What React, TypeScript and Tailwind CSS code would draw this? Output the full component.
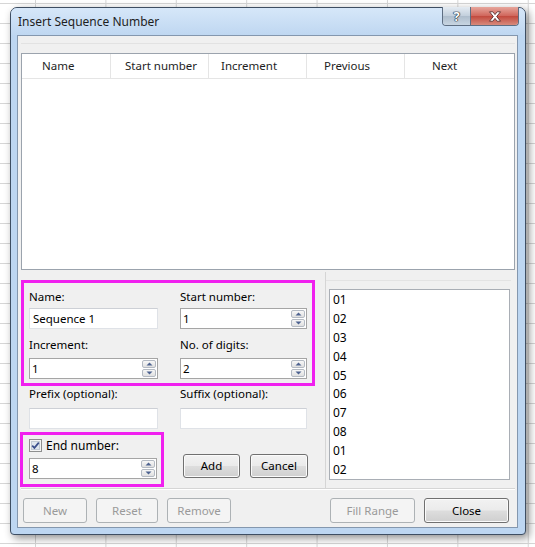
import React from 'react';

const Arrow = ({ up }: { up?: boolean }) => (
  <svg width="7" height="4" viewBox="0 0 7 4">
    <path d={up ? 'M0.5 3.5 L3.5 0.5 L6.5 3.5 Z' : 'M0.5 0.5 L3.5 3.5 L6.5 0.5 Z'} fill="#4d6290" />
  </svg>
);

const SpinBox = ({ value, className = '' }: { value: string; className?: string }) => (
  <div className={`flex h-[21px] items-center border border-[#a5a5a5] bg-white ${className}`}>
    <span className="flex-1 pl-[2px] leading-none">{value}</span>
    <div className="mr-[1px] flex flex-col gap-px">
      <div className="flex h-[8px] w-[14px] items-center justify-center rounded-[2px] border border-[#b4bac3] bg-[linear-gradient(to_bottom,#f7f7f7,#e0e0e0)]">
        <Arrow up />
      </div>
      <div className="flex h-[8px] w-[14px] items-center justify-center rounded-[2px] border border-[#b4bac3] bg-[linear-gradient(to_bottom,#f7f7f7,#e0e0e0)]">
        <Arrow />
      </div>
    </div>
  </div>
);

const TextBox = ({ value = '', className = '' }: { value?: string; className?: string }) => (
  <div className={`flex h-[21px] items-center border border-[#dfe2e7] border-t-[#cdd0d6] bg-white pl-[3px] ${className}`}>
    {value}
  </div>
);

interface BtnProps {
  children: React.ReactNode;
  className?: string;
  disabled?: boolean;
}

const Btn = ({ children, className = '', disabled }: BtnProps) => (
  <div
    className={`flex items-center justify-center rounded-[3px] border ${
      disabled
        ? 'border-[#adb2b5] bg-[#f4f4f4] text-[#9a9a9a]'
        : 'border-[#707070] bg-[linear-gradient(to_bottom,#f2f2f2_0%,#ebebeb_48%,#dddddd_52%,#cfcfcf_100%)] text-black shadow-[inset_0_0_0_1px_#fbfbfb]'
    } ${className}`}
  >
    {children}
  </div>
);

const columns = [
  { label: 'Name', cls: 'w-[89px] pl-[20px] border-r' },
  { label: 'Start number', cls: 'w-[98px] pl-[14px] border-r' },
  { label: 'Increment', cls: 'w-[98px] pl-[12px] border-r' },
  { label: 'Previous', cls: 'w-[98px] pl-[17px] border-r' },
  { label: 'Next', cls: 'flex-1 pl-[27px]' },
];

const preview = ['01', '02', '03', '04', '05', '06', '07', '08', '01', '02'];

export default function App() {
  return (
    <div className="h-[547px] w-[535px] overflow-hidden bg-white bg-[linear-gradient(to_right,#d6d6d6_1px,transparent_1px),linear-gradient(to_bottom,#d6d6d6_1px,transparent_1px)] bg-[size:70.4px_20px] bg-[position:35px_3px] pt-[7px] pl-[10px] font-['Noto_Sans','Open_Sans',sans-serif] text-[11.5px] text-black">
      <div className="flex h-[528px] w-[516px] flex-col rounded-t-[7px] rounded-b-[4px] border border-[#3e4e62] bg-[#bdd6f1] shadow-[3px_3px_9px_rgba(0,0,0,0.45)]">
        {/* title bar */}
        <div className="flex h-[27px] items-start rounded-t-[6px] bg-[linear-gradient(to_bottom,#d6e7f9,#bfd7f1)]">
          <div className="flex h-[27px] flex-1 items-center pl-[7px] text-[12px] text-[#1e1e1e]">Insert Sequence Number</div>
          <div className="-mt-px mr-[6px] flex h-[19px] overflow-hidden rounded-b-[4px] border border-t-0 border-[#5e6e82]">
            <div className="flex w-[28px] items-center justify-center border-r border-[#5e6e82] bg-[linear-gradient(to_bottom,#e4ebf2,#c2cfdc_50%,#aebdcc_51%,#c8d5e2)] text-[13px] font-bold leading-none text-white [text-shadow:0_0_1px_#1c2836,0_0_1px_#1c2836,0_0_1px_#1c2836,0_0_1px_#1c2836]">
              ?
            </div>
            <div className="flex w-[47px] items-center justify-center bg-[linear-gradient(to_bottom,#e6a69c,#d0655a_50%,#c2493d_51%,#d88a7c)]">
              <svg width="14" height="11" viewBox="0 0 14 11">
                <path
                  d="M1.5 0.8 H4.8 L7 3.6 L9.2 0.8 H12.5 L8.7 5.5 L12.5 10.2 H9.2 L7 7.4 L4.8 10.2 H1.5 L5.3 5.5 Z"
                  fill="#ffffff"
                  stroke="#4b2222"
                  strokeWidth="0.8"
                />
              </svg>
            </div>
          </div>
        </div>

        {/* client area */}
        <div className="ml-[6px] mr-[7px] flex h-[493px] flex-col border border-[#8497ae] bg-[#f0f0f0] pl-[3px] pr-[2px]">
          <div className="mt-[7px] border-t border-[#e2e2e2]" />

          {/* list view */}
          <div className="mt-[9px] h-[217px] border border-[#9ba3ad] bg-white">
            <div className="flex h-[25px] border-b border-[#e5e5e5]">
              {columns.map((c) => (
                <div key={c.label} className={`flex items-center border-[#e5e5e5] text-[#1e1e1e] ${c.cls}`}>
                  {c.label}
                </div>
              ))}
            </div>
          </div>

          {/* lower section */}
          <div className="mt-[2px] flex h-[217px] border-b border-[#d5d5d5] shadow-[0_1px_0_#ffffff]">
            <div className="flex w-[305px] flex-col border-r border-[#d5d5d5] pt-[8px]">
              <div className="h-[106px] w-[294px] border-[3px] border-[#f020ef] pl-[5px] pt-[6px]">
                <div className="flex">
                  <div className="flex w-[151px] flex-col">
                    <div className="h-[16px] leading-[16px]">Name:</div>
                    <TextBox value="Sequence 1" className="mt-[3px] w-[129px]" />
                    <div className="mt-[8px] h-[16px] leading-[16px]">Increment:</div>
                    <SpinBox value="1" className="mt-[5px] w-[129px]" />
                  </div>
                  <div className="flex flex-col">
                    <div className="h-[16px] leading-[16px]">Start number:</div>
                    <SpinBox value="1" className="mt-[3px] w-[127px]" />
                    <div className="mt-[8px] h-[16px] leading-[16px]">No. of digits:</div>
                    <SpinBox value="2" className="mt-[5px] w-[127px]" />
                  </div>
                </div>
              </div>

              <div className="flex pl-[8px]">
                <div className="flex w-[151px] flex-col">
                  <div className="h-[16px] leading-[16px]">Prefix (optional):</div>
                  <TextBox className="mt-[6px] w-[129px]" />
                </div>
                <div className="flex flex-col">
                  <div className="h-[16px] leading-[16px]">Suffix (optional):</div>
                  <TextBox className="mt-[6px] w-[127px]" />
                </div>
              </div>

              <div className="mt-[3px] flex items-start">
                <div className="-ml-px h-[55px] w-[144px] border-[3px] border-[#f020ef] pl-[6px] pt-[4px]">
                  <div className="flex h-[13px] items-center gap-[4px]">
                    <svg width="13" height="13" viewBox="0 0 13 13">
                      <rect x="0.5" y="0.5" width="12" height="12" fill="#f4f4f4" stroke="#8e8f8f" />
                      <rect x="2.5" y="2.5" width="8" height="8" fill="#dfe6ee" stroke="#c2cad4" />
                      <path d="M3.2 6.6 L5.4 8.9 L9.8 3.6" fill="none" stroke="#3b4f8c" strokeWidth="1.7" />
                    </svg>
                    <span className="text-[12px]">End number:</span>
                  </div>
                  <SpinBox value="8" className="mt-[6px] w-[128px]" />
                </div>
                <Btn className="ml-[19px] mt-[22px] h-[24px] w-[57px]">Add</Btn>
                <Btn className="ml-[10px] mt-[22px] h-[24px] w-[58px]">Cancel</Btn>
              </div>
            </div>

            <div className="flex flex-1 flex-col">
              <div className="mt-[8px] mr-[4px] border-t border-[#e3e3e3]" />
              <div className="ml-[3px] mt-[8px] h-[191px] w-[181px] overflow-hidden border border-[#a9aeb5] bg-white pl-[3px] pt-[1px]">
                {preview.map((p, i) => (
                  <div key={i} className="flex h-[18.8px] items-center text-[12px]">
                    {p}
                  </div>
                ))}
              </div>
            </div>
          </div>

          {/* bottom buttons */}
          <div className="mt-[9px] flex h-[25px] pl-[2px]">
            <Btn disabled className="w-[64px]">New</Btn>
            <Btn disabled className="ml-[9px] w-[62px]">Reset</Btn>
            <Btn disabled className="ml-[9px] w-[64px]">Remove</Btn>
            <Btn disabled className="ml-[99px] w-[85px]">Fill Range</Btn>
            <Btn className="ml-[9px] w-[85px]">Close</Btn>
          </div>
        </div>
      </div>
    </div>
  );
}
